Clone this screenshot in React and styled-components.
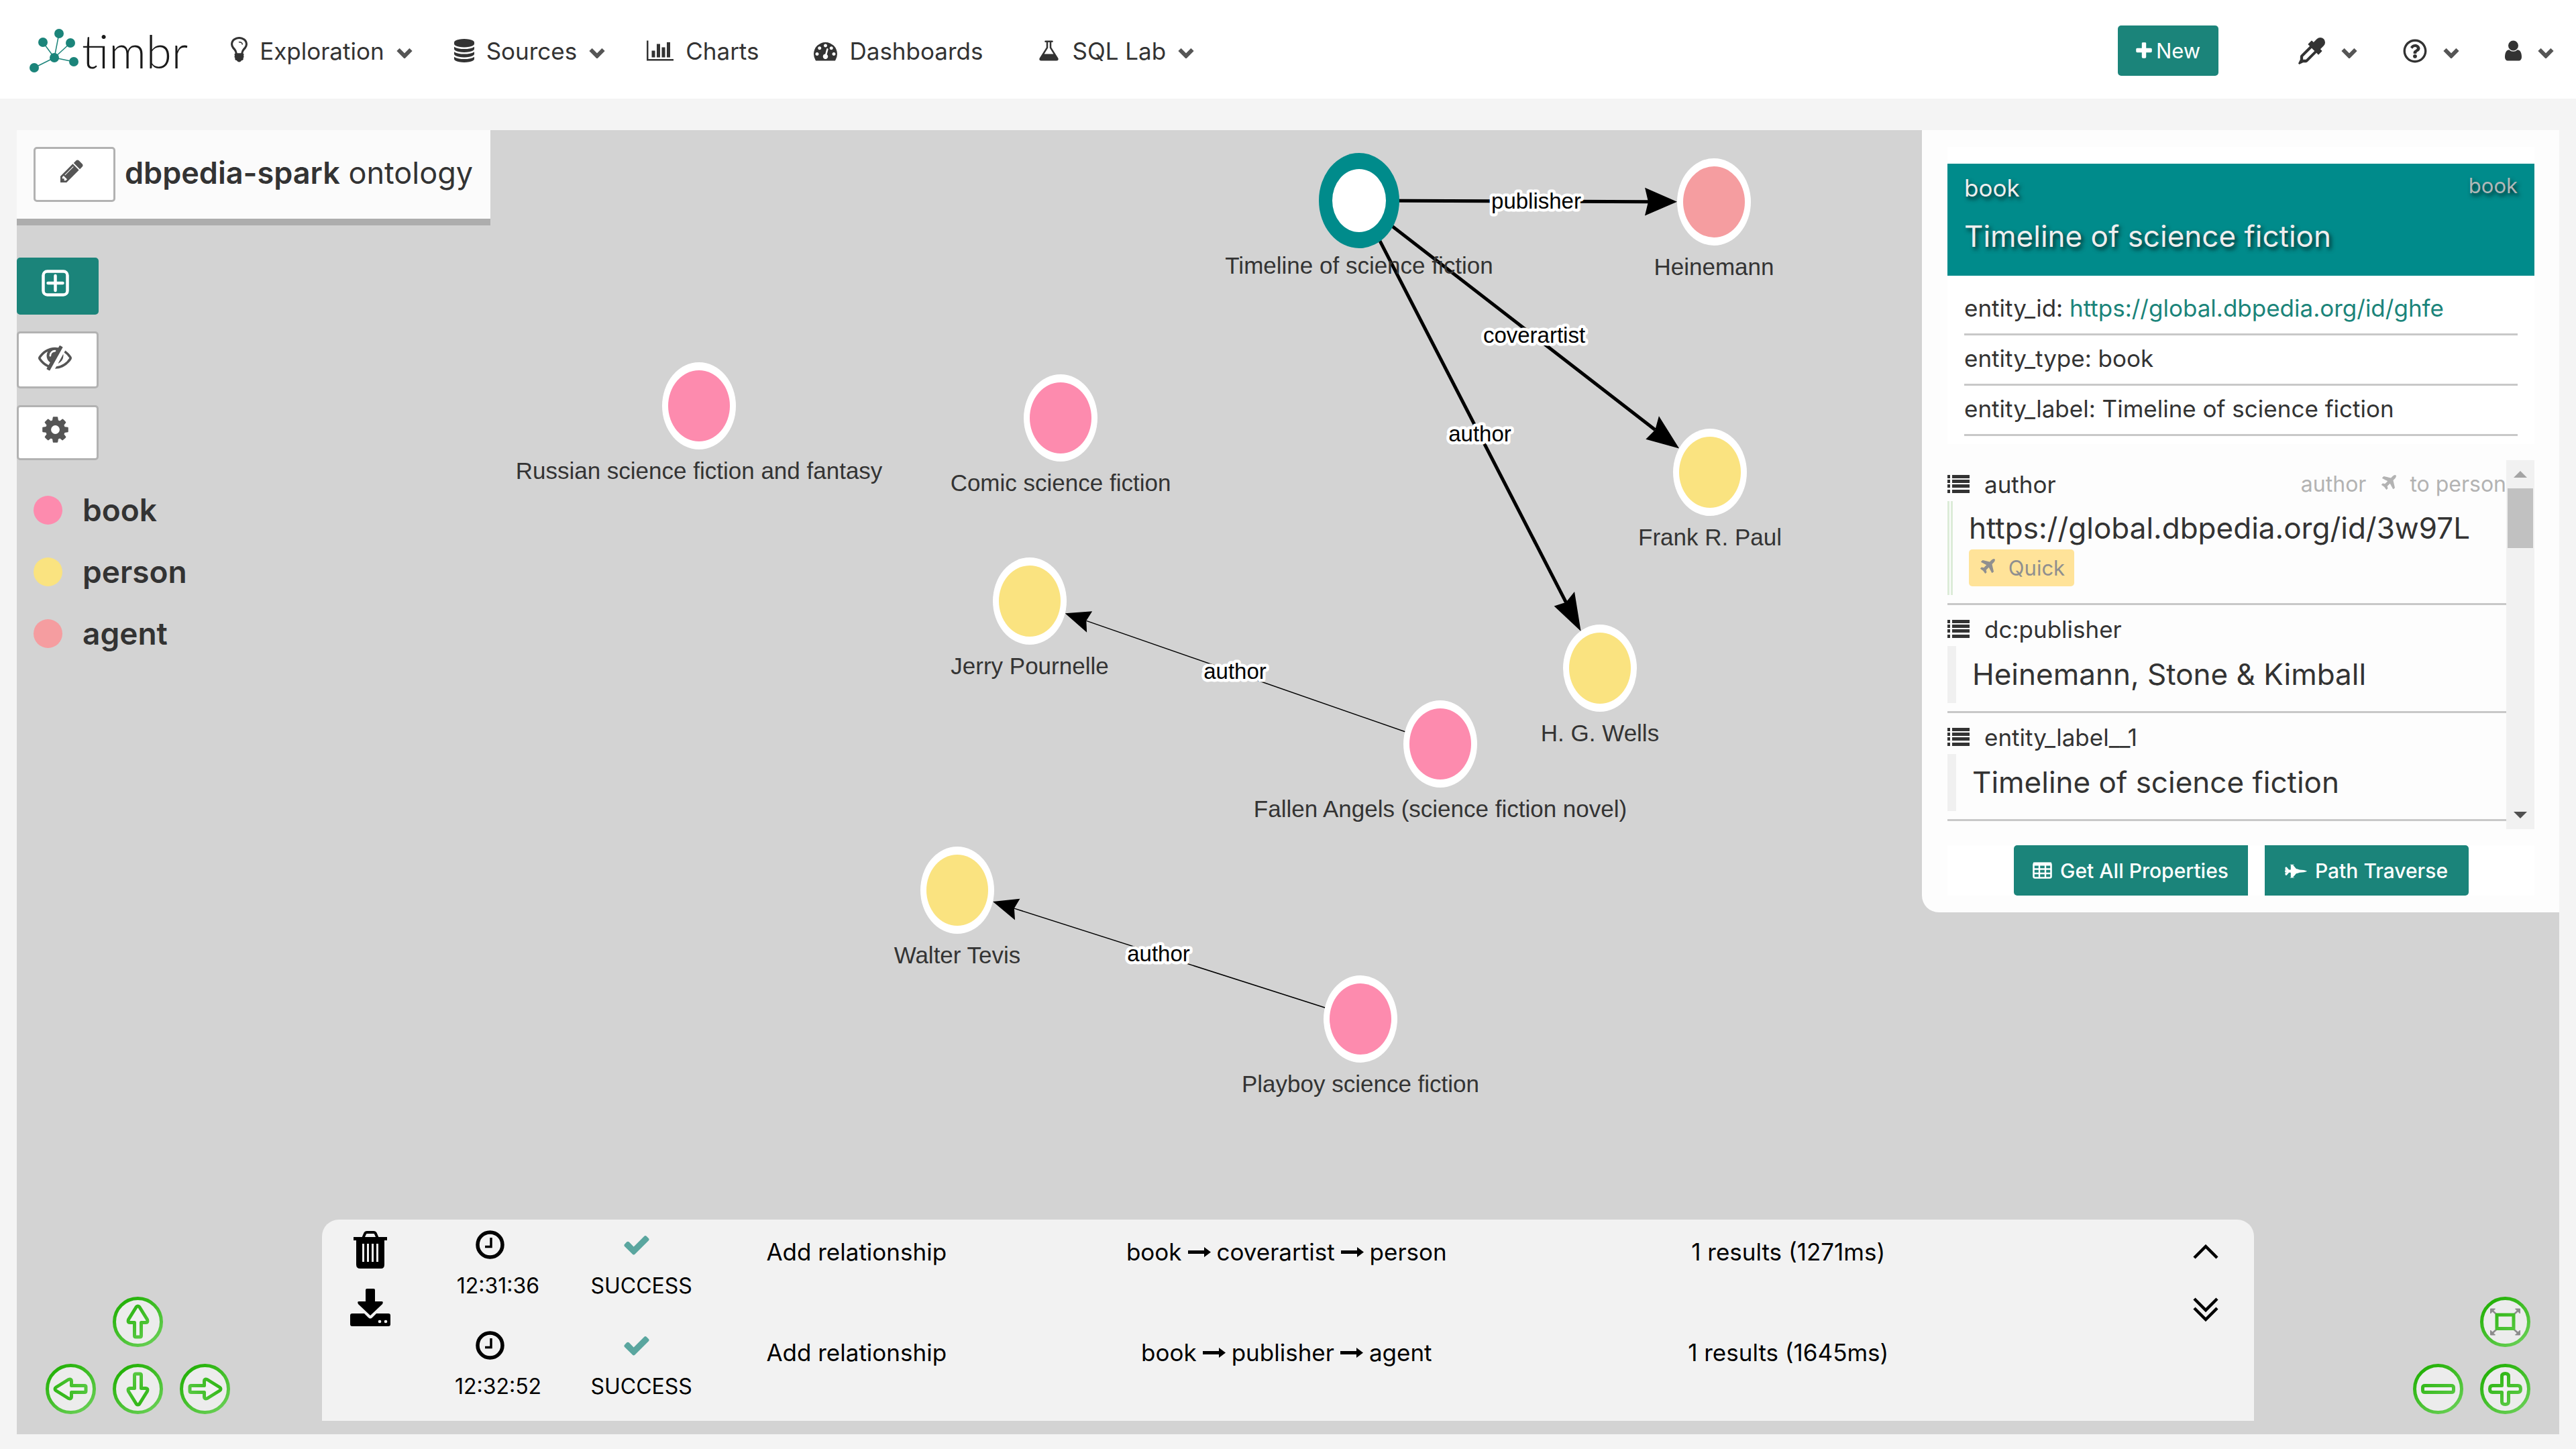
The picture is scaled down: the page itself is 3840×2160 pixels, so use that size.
import styled, { createGlobalStyle } from "styled-components";
import { FaRegQuestionCircle } from "react-icons/fa";

const GlobalStyle = createGlobalStyle`
  * {
    box-sizing: border-box;
  }
  body {
    margin: 0;
    background: #f4f4f4;
    color: #333;
    font-family: Inter, "Open Sans", sans-serif;
    font-size: 35px;
    line-height: 48px;
  }
  button {
    font: inherit;
    color: inherit;
    padding: 0;
    border: 0;
    background: none;
    cursor: pointer;
  }
  ul {
    list-style: none;
    margin: 0;
    padding: 0;
  }
  svg {
    display: block;
    flex: none;
  }
`;

/* ---------- icons ---------- */

// width of each glyph and its outline, y axis pointing up
const GLYPHS = {
  bulb: [
    1024,
    "M736 1056q0 -13 -9.5 -22.5t-22.5 -9.5t-22.5 9.5t-9.5 22.5q0 46 -54 71t-106 25q-13 0 -22.5 9.5t-9.5 22.5t9.5 22.5t22.5 9.5q50 0 99.5 -16t87 -54t37.5 -90zM896 1056q0 72 -34.5 134t-90 101.5t-123 62t-136.5 22.5t-136.5 -22.5t-123 -62t-90 -101.5t-34.5 -134q0 -101 68 -180q10 -11 30.5 -33t30.5 -33q128 -153 141 -298h228q13 145 141 298q10 11 30.5 33t30.5 33q68 79 68 180zM1024 1056q0 -155 -103 -268q-45 -49 -74.5 -87t-59.5 -95.5t-34 -107.5q47 -28 47 -82q0 -37 -25 -64q25 -27 25 -64q0 -52 -45 -81q13 -23 13 -47q0 -46 -31.5 -71t-77.5 -25q-20 -44 -60 -70t-87 -26t-87 26t-60 70q-46 0 -77.5 25t-31.5 71q0 24 13 47q-45 29 -45 81q0 37 25 64q-25 27 -25 64q0 54 47 82q-4 50 -34 107.5t-59.5 95.5t-74.5 87q-103 113 -103 268q0 99 44.5 184.5t117 142t164 89t186.5 32.5t186.5 -32.5t164 -89t117 -142t44.5 -184.5z",
  ],
  database: [
    1536,
    "M768 768q237 0 443 43t325 127v-170q0 -69 -103 -128t-280 -93.5t-385 -34.5t-385 34.5t-280 93.5t-103 128v170q119 -84 325 -127t443 -43zM768 0q237 0 443 43t325 127v-170q0 -69 -103 -128t-280 -93.5t-385 -34.5t-385 34.5t-280 93.5t-103 128v170q119 -84 325 -127t443 -43zM768 384q237 0 443 43t325 127v-170q0 -69 -103 -128t-280 -93.5t-385 -34.5t-385 34.5t-280 93.5t-103 128v170q119 -84 325 -127t443 -43zM768 1536q208 0 385 -34.5t280 -93.5t103 -128v-128q0 -69 -103 -128t-280 -93.5t-385 -34.5t-385 34.5t-280 93.5t-103 128v128q0 69 103 128t280 93.5t385 34.5z",
  ],
  chart: [
    2048,
    "M640 640v-512h-256v512h256zM1024 1152v-1024h-256v1024h256zM2048 0v-128h-2048v1536h128v-1408h1920zM1408 896v-768h-256v768h256zM1792 1280v-1152h-256v1152h256z",
  ],
  dashboard: [
    1792,
    "M384 384q0 53 -37.5 90.5t-90.5 37.5t-90.5 -37.5t-37.5 -90.5t37.5 -90.5t90.5 -37.5t90.5 37.5t37.5 90.5zM576 832q0 53 -37.5 90.5t-90.5 37.5t-90.5 -37.5t-37.5 -90.5t37.5 -90.5t90.5 -37.5t90.5 37.5t37.5 90.5zM1004 351l101 382q6 26 -7.5 48.5t-38.5 29.5t-48 -6.5t-30 -39.5l-101 -382q-60 -5 -107 -43.5t-63 -98.5q-20 -77 20 -146t117 -89t146 20t89 117q16 60 -6 117t-72 91zM1664 384q0 53 -37.5 90.5t-90.5 37.5t-90.5 -37.5t-37.5 -90.5t37.5 -90.5t90.5 -37.5t90.5 37.5t37.5 90.5zM1024 1024q0 53 -37.5 90.5t-90.5 37.5t-90.5 -37.5t-37.5 -90.5t37.5 -90.5t90.5 -37.5t90.5 37.5t37.5 90.5zM1472 832q0 53 -37.5 90.5t-90.5 37.5t-90.5 -37.5t-37.5 -90.5t37.5 -90.5t90.5 -37.5t90.5 37.5t37.5 90.5zM1792 384q0 -261 -141 -483q-19 -29 -54 -29h-1402q-35 0 -54 29q-141 221 -141 483q0 182 71 348t191 286t286 191t348 71t348 -71t286 -191t191 -286t71 -348z",
  ],
  flask: [
    1664,
    "M1527 88q56 -89 21.5 -152.5t-140.5 -63.5h-1152q-106 0 -140.5 63.5t21.5 152.5l503 793v399h-64q-26 0 -45 19t-19 45t19 45t45 19h512q26 0 45 -19t19 -45t-19 -45t-45 -19h-64v-399zM748 813l-272 -429h712l-272 429l-20 31v37v399h-128v-399v-37z",
  ],
  plus: [
    1408,
    "M1408 800v-192q0 -40 -28 -68t-68 -28h-416v-416q0 -40 -28 -68t-68 -28h-192q-40 0 -68 28t-28 68v416h-416q-40 0 -68 28t-28 68v192q0 40 28 68t68 28h416v416q0 40 28 68t68 28h192q40 0 68 -28t28 -68v-416h416q40 0 68 -28t28 -68z",
  ],
  user: [
    1280,
    "M1280 137q0 -109 -62.5 -187t-150.5 -78h-854q-88 0 -150.5 78t-62.5 187q0 85 8.5 160.5t31.5 152t58.5 131t94 89t134.5 34.5q131 -128 313 -128t313 128q76 0 134.5 -34.5t94 -89t58.5 -131t31.5 -152t8.5 -160.5zM1024 1024q0 -159 -112.5 -271.5t-271.5 -112.5t-271.5 112.5t-112.5 271.5t112.5 271.5t271.5 112.5t271.5 -112.5t112.5 -271.5z",
  ],
  dropper: [
    1792,
    "M1698 1442q94 -94 94 -226.5t-94 -225.5l-225 -223l104 -104q10 -10 10 -23t-10 -23l-210 -210q-10 -10 -23 -10t-23 10l-105 105l-603 -603q-37 -37 -90 -37h-203l-256 -128l-64 64l128 256v203q0 53 37 90l603 603l-105 105q-10 10 -10 23t10 23l210 210q10 10 23 10t23 -10l104 -104l223 225q93 94 225.5 94t226.5 -94zM512 64l576 576l-192 192l-576 -576v-192h192z",
  ],
  pencil: [
    1536,
    "M363 0l91 91l-235 235l-91 -91v-107h128v-128h107zM886 928q0 22 -22 22q-10 0 -17 -7l-542 -542q-7 -7 -7 -17q0 -22 22 -22q10 0 17 7l542 542q7 7 7 17zM832 1120l416 -416l-832 -832h-416v416zM1515 1024q0 -53 -37 -90l-166 -166l-416 416l166 165q36 38 90 38q53 0 91 -38l235 -234q37 -39 37 -91z",
  ],
  eyeSlash: [
    1792,
    "M555 201l78 141q-87 63 -136 159t-49 203q0 121 61 225q-229 -117 -381 -353q167 -258 427 -375zM944 960q0 20 -14 34t-34 14q-125 0 -214.5 -89.5t-89.5 -214.5q0 -20 14 -34t34 -14t34 14t14 34q0 86 61 147t147 61q20 0 34 14t14 34zM1307 1151q0 -7 -1 -9q-106 -189 -316 -567t-315 -566l-49 -89q-10 -16 -28 -16q-12 0 -134 70q-16 10 -16 28q0 12 44 87q-143 65 -263.5 173t-208.5 245q-20 31 -20 69t20 69q153 235 380 371t496 136q89 0 180 -17l54 97q10 16 28 16q5 0 18 -6t31 -15.5t33 -18.5t31.5 -18.5t19.5 -11.5q16 -10 16 -27zM1344 704q0 -139 -79 -253.5t-209 -164.5l280 502q8 -45 8 -84zM1792 576q0 -35 -20 -69q-39 -64 -109 -145q-150 -172 -347.5 -267t-419.5 -95l74 132q212 18 392.5 137t301.5 307q-115 179 -282 294l63 112q95 -64 182.5 -153t144.5 -184q20 -34 20 -69z",
  ],
  cog: [
    1536,
    "M1024 640q0 106 -75 181t-181 75t-181 -75t-75 -181t75 -181t181 -75t181 75t75 181zM1536 749v-222q0 -12 -8 -23t-20 -13l-185 -28q-19 -54 -39 -91q35 -50 107 -138q10 -12 10 -25t-9 -23q-27 -37 -99 -108t-94 -71q-12 0 -26 9l-138 108q-44 -23 -91 -38q-16 -136 -29 -186q-7 -28 -36 -28h-222q-14 0 -24.5 8.5t-11.5 21.5l-28 184q-49 16 -90 37l-141 -107q-10 -9 -25 -9q-14 0 -25 11q-126 114 -165 168q-7 10 -7 23q0 12 8 23q15 21 51 66.5t54 70.5q-27 50 -41 99l-183 27q-13 2 -21 12.5t-8 23.5v222q0 12 8 23t19 13l186 28q14 46 39 92q-40 57 -107 138q-10 12 -10 24q0 10 9 23q26 36 98.5 107.5t94.5 71.5q13 0 26 -10l138 -107q44 23 91 38q16 136 29 186q7 28 36 28h222q14 0 24.5 -8.5t11.5 -21.5l28 -184q49 -16 90 -37l142 107q9 9 24 9q13 0 25 -10q129 -119 165 -170q7 -8 7 -22q0 -12 -8 -23q-15 -21 -51 -66.5t-54 -70.5q26 -50 41 -98l183 -28q13 -2 21 -12.5t8 -23.5z",
  ],
  plane: [
    1600,
    "M1568 1504q44 -52 12 -148t-108 -172l-161 -161l160 -696q5 -19 -12 -33l-128 -96q-7 -6 -19 -6q-4 0 -7 1q-15 3 -21 16l-279 508l-259 -259l53 -194q5 -17 -8 -31l-96 -96q-9 -9 -23 -9h-2q-15 2 -24 13l-189 252l-252 189q-11 7 -13 23q-1 13 9 25l96 97q9 9 23 9q6 0 8 -1l194 -53l259 259l-508 279q-14 8 -17 24q-2 16 9 27l128 128q14 13 30 8l665 -159l160 160q76 76 172 108t148 -12z",
  ],
  jet: [
    1920,
    "M1920 576q-1 -32 -288 -96l-352 -32l-224 -64h-64l-293 -352h69q26 0 45 -4.5t19 -11.5t-19 -11.5t-45 -4.5h-96h-160h-64v32h64v416h-160l-192 -224h-96l-32 32v192h32v32h128v8l-192 24v128l192 24v8h-128v32h-32v192l32 32h96l192 -224h160v416h-64v32h64h160h96q26 0 45 -4.5t19 -11.5t-19 -11.5t-45 -4.5h-69l293 -352h64l224 -64l352 -32q261 -58 287 -93z",
  ],
  check: [
    1792,
    "M1671 970q0 -40 -28 -68l-724 -724l-136 -136q-28 -28 -68 -28t-68 28l-136 136l-362 362q-28 28 -28 68t28 68l136 136q28 28 68 28t68 -28l294 -295l656 657q28 28 68 28t68 -28l136 -136q28 -28 28 -68z",
  ],
};

function Glyph({ name, size = 35 }) {
  const [width, d] = GLYPHS[name];
  return (
    <svg
      width={Math.round((width / 1792) * size)}
      height={size}
      viewBox={`0 0 ${width} 1792`}
      fill="currentColor"
      aria-hidden="true"
    >
      <path transform="matrix(1 0 0 -1 0 1536)" d={d} />
    </svg>
  );
}

const CaretIcon = styled.svg`
  margin-top: 8px;
`;

const Caret = () => (
  <CaretIcon width="24" height="15" viewBox="0 0 24 15" aria-hidden="true">
    <path d="M2.500 2l9.500 9.500L21.500 2" fill="none" stroke="#555" strokeWidth="6" />
  </CaretIcon>
);

const ListIcon = () => (
  <svg width="33" height="27" viewBox="0 0 33 27" fill="#333" aria-hidden="true">
    {[0, 7, 14, 22].map((y) => (
      <g key={y}>
        <rect y={y} width="4" height="5" />
        <rect x="7" y={y} width="26" height="5" />
      </g>
    ))}
  </svg>
);

const TableIcon = () => (
  <svg width="29" height="25" viewBox="0 0 29 25" fill="none" stroke="#fff" aria-hidden="true">
    <rect x="1.5" y="2" width="26" height="21.5" rx="2" strokeWidth="2.6" />
    <path d="M1 3h27" strokeWidth="5" />
    <path d="M10 3v20M19 3v20M2 10.5h25M2 17h25" strokeWidth="2.4" />
  </svg>
);

const AddBoxIcon = () => (
  <svg width="41" height="40" viewBox="0 0 41 40" fill="none" stroke="#fff" strokeWidth="4.5" aria-hidden="true">
    <rect x="2.5" y="2.5" width="36" height="35" rx="6" />
    <path d="M20.500 9v22M9.500 20h22" strokeLinecap="round" />
  </svg>
);

const TrashIcon = () => (
  <svg width="52" height="56" viewBox="0 0 52 56" aria-hidden="true">
    <path d="M15 11l3-7q1-2 3-2h10q2 0 3 2l3 7" fill="none" stroke="#000" strokeWidth="4" />
    <path d="M1 9h50v5h-4v36q0 6-5 6H11q-6 0-6-6V14H1z" />
    <path d="M15.500 19v27M22.500 19v27M29.500 19v27M36.500 19v27" stroke="#f2f2f2" strokeWidth="3" />
  </svg>
);

const DownloadIcon = () => (
  <svg width="60" height="56" viewBox="0 0 60 56" aria-hidden="true">
    <path d="M25 0h10q2 0 2 2v17h10q3 0 1 4L30 40 12 23q-2-4 1-4h10V2q0-2 2-2z" />
    <path d="M3 37h18l6 6q3 3 6 0l6-6h18q3 0 3 3v13q0 3-3 3H3q-3 0-3-3V40q0-3 3-3z" />
    <circle cx="44" cy="49" r="2.300" fill="#f2f2f2" />
    <circle cx="53" cy="49" r="2.300" fill="#f2f2f2" />
  </svg>
);

const ClockIcon = () => (
  <svg width="43" height="43" viewBox="0 0 43 43" fill="none" stroke="#000" aria-hidden="true">
    <circle cx="21.500" cy="21.500" r="18.500" strokeWidth="5.500" />
    <path d="M23 11v13.500h-9" strokeWidth="3.500" />
  </svg>
);

const ArrowIcon = () => (
  <svg width="34" height="15" viewBox="0 0 34 15" aria-hidden="true">
    <path d="M0 5h24V0l10 7.500L24 15v-5H0z" />
  </svg>
);

const Chevrons = ({ d, height }) => (
  <svg width="38" height={height} viewBox={`0 0 38 ${height}`} fill="none" stroke="#000" strokeWidth="4.500" aria-hidden="true">
    <path d={d} />
  </svg>
);

/* ---------- top bar ---------- */

const Page = styled.div`
  display: flex;
  flex-direction: column;
  min-height: 100vh;
`;
const TopBar = styled.header`
  display: flex;
  align-items: center;
  height: 147px;
  padding: 4px 33px 0 44px;
  background: #fff;
`;
const Logo = styled.a`
  display: flex;
  align-items: center;
  gap: 4px;
  margin-right: 64px;
  color: #1a1a1a;
  font-family: Lato, sans-serif;
  font-size: 69px;
  font-weight: 300;
  line-height: 72px;
  text-decoration: none;
`;
const Nav = styled.nav`
  display: flex;
  flex: 1;
`;
const NavItem = styled.button`
  display: flex;
  align-items: center;
  gap: 18px;
  margin-right: ${({ $plain }) => ($plain ? 82 : 62)}px;
`;
const NewButton = styled.button`
  display: flex;
  align-items: center;
  justify-content: center;
  gap: 6px;
  width: 150px;
  height: 75px;
  margin-right: 51px;
  border-radius: 5px;
  background: #1b847a;
  color: #fff;
  font-size: 31px;
`;
const ToolButton = styled.button`
  display: flex;
  align-items: center;
  gap: 24px;
  margin-left: 68px;
`;

const NAV = [
  { icon: "bulb", size: 44, label: "Exploration", menu: true },
  { icon: "database", label: "Sources", menu: true },
  { icon: "chart", label: "Charts" },
  { icon: "dashboard", label: "Dashboards" },
  { icon: "flask", label: "SQL Lab", menu: true },
];

function LogoMark() {
  const dots = [
    [44, 7],
    [20, 20],
    [61, 21],
    [66, 49],
    [7, 58],
  ];
  return (
    <svg width="74" height="66" viewBox="0 0 74 66" fill="#1b847a" aria-hidden="true">
      {dots.map(([x, y]) => (
        <g key={x}>
          <path d={`M37 43L${x} ${y}`} stroke="#1b847a" strokeWidth="1.500" />
          <circle cx={x} cy={y} r="7" />
        </g>
      ))}
      <circle cx="37" cy="43" r="7" />
    </svg>
  );
}

function Header() {
  return (
    <TopBar>
      <Logo href="#">
        <LogoMark />
        timbr
      </Logo>
      <Nav>
        {NAV.map(({ icon, size, label, menu }) => (
          <NavItem key={label} $plain={!menu}>
            <Glyph name={icon} size={size} />
            {label}
            {menu && <Caret />}
          </NavItem>
        ))}
      </Nav>
      <NewButton>
        <Glyph name="plus" size={30} />
        New
      </NewButton>
      <ToolButton aria-label="Theme">
        <Glyph name="dropper" size={40} />
        <Caret />
      </ToolButton>
      <ToolButton aria-label="Help">
        <FaRegQuestionCircle size={36} />
        <Caret />
      </ToolButton>
      <ToolButton aria-label="Account">
        <Glyph name="user" />
        <Caret />
      </ToolButton>
    </TopBar>
  );
}

/* ---------- graph ---------- */

const COLORS = { book: "#fd8bae", person: "#fae380", agent: "#f59da0" };
const STRETCH = 1.17; // the graph is taller than it is wide

const NODES = {
  timeline: { x: 2001, y: 105, label: "Timeline of science fiction", selected: true },
  heinemann: { x: 2530, y: 107, label: "Heinemann", type: "agent" },
  paul: { x: 2524, y: 510, label: "Frank R. Paul", type: "person" },
  wells: { x: 2360, y: 802, label: "H. G. Wells", type: "person" },
  fallen: { x: 2122, y: 915, label: "Fallen Angels (science fiction novel)", type: "book" },
  playboy: { x: 2003, y: 1325, label: "Playboy science fiction", type: "book" },
  tevis: { x: 1402, y: 1133, label: "Walter Tevis", type: "person" },
  pournelle: { x: 1510, y: 702, label: "Jerry Pournelle", type: "person" },
  russian: { x: 1017, y: 411, label: "Russian science fiction and fantasy", type: "book" },
  comic: { x: 1556, y: 429, label: "Comic science fiction", type: "book" },
};
const EDGES = [
  { from: "timeline", to: "heinemann", label: "publisher", x: 2265, y: 117, bold: true },
  { from: "timeline", to: "paul", label: "coverartist", x: 2262, y: 317, bold: true },
  { from: "timeline", to: "wells", label: "author", x: 2181, y: 464, bold: true },
  { from: "fallen", to: "pournelle", label: "author", x: 1816, y: 818 },
  { from: "playboy", to: "tevis", label: "author", x: 1702, y: 1239 },
];

const GraphArea = styled.svg`
  position: absolute;
  inset: 0;
  width: 100%;
  height: 100%;
  font-family: "Liberation Sans", Arial, sans-serif;
  text-anchor: middle;
`;
const NodeLabel = styled.text`
  font-size: 35px;
  fill: #343434;
`;
const EdgeLabel = styled.text`
  font-size: 33px;
  fill: #000;
  stroke: #fff;
  stroke-width: 9px;
  stroke-linejoin: round;
  paint-order: stroke;
`;

function Edge({ from, to, label, x, y, bold }) {
  const a = NODES[from];
  const b = NODES[to];
  const dx = b.x - a.x;
  const dy = (b.y - a.y) / STRETCH;
  const len = Math.hypot(dx, dy);
  const ux = dx / len;
  const uy = dy / len;
  const size = bold ? 48 : 38;
  // point `along` the edge measured back from the target, `side` off it
  const at = (along, side = 0) => [
    b.x - ux * along - uy * side,
    b.y - (uy * along - ux * side) * STRETCH,
  ];
  const points = [at(55), at(55 + size, size * 0.37), at(50 + size), at(55 + size, size * -0.37)];
  const [ex, ey] = at(50 + size);
  return (
    <g>
      <line x1={a.x} y1={a.y} x2={ex} y2={ey} stroke="#000" strokeWidth={bold ? 5 : 1.5} />
      <polygon points={points.join(" ")} />
      <EdgeLabel x={x} y={y}>
        {label}
      </EdgeLabel>
    </g>
  );
}

function Graph() {
  return (
    <GraphArea viewBox="0 0 3790 1944">
      {EDGES.map((edge) => (
        <Edge key={edge.from + edge.to} {...edge} />
      ))}
      {Object.values(NODES).map(({ x, y, label, type, selected }) => (
        <g key={label}>
          <ellipse cx={x} cy={y} rx={selected ? 60 : 55} ry={selected ? 71 : 65} fill={selected ? "#008b8b" : "#fff"} />
          <ellipse cx={x} cy={y} rx={selected ? 40 : 46} ry={selected ? 47 : 53} fill={selected ? "#fff" : COLORS[type]} />
          <NodeLabel x={x} y={y + 109}>
            {label}
          </NodeLabel>
        </g>
      ))}
    </GraphArea>
  );
}

/* ---------- workspace ---------- */

const Workspace = styled.main`
  position: relative;
  display: flex;
  flex: 1;
  flex-direction: column;
  justify-content: space-between;
  margin: 47px 25px 22px;
  background: #d3d3d3;
`;
const Row = styled.div`
  position: relative;
  display: flex;
  align-items: flex-start;
  justify-content: space-between;
`;
const TitleBar = styled.div`
  display: flex;
  align-items: center;
  gap: 14px;
  height: 142px;
  padding: 0 26px 0 25px;
  border-bottom: 10px solid #adadad;
  background: #fbfbfb;
`;
const Title = styled.h1`
  margin: 0;
  padding-bottom: 4px;
  font-size: 45px;
  font-weight: 400;
  strong {
    font-weight: 600;
  }
`;
const IconButton = styled.button`
  display: flex;
  align-items: center;
  justify-content: center;
  width: 122px;
  height: ${({ $tall }) => ($tall ? 85 : 82)}px;
  padding: 0 8px 10px 0;
  border: 3px solid ${({ $active }) => ($active ? "#1b847a" : "#b2b2b2")};
  border-radius: 5px;
  background: ${({ $active }) => ($active ? "#1b847a" : "#fff")};
  color: #555;
`;
const Tools = styled.div`
  display: flex;
  flex-direction: column;
  gap: 25px;
  margin: 48px 0 28px;
`;
const LegendItem = styled.li`
  display: flex;
  align-items: center;
  gap: 30px;
  height: 92px;
  padding-left: 25px;
  font-size: 46px;
  font-weight: 600;
  &::before {
    content: "";
    width: 43px;
    height: 43px;
    border-radius: 50%;
    background: ${({ $color }) => $color};
  }
`;

/* ---------- entity panel ---------- */

const Panel = styled.aside`
  width: 950px;
  padding: 25px 37px 25px 38px;
  border-radius: 0 0 0 25px;
  background: #fdfdfd;
`;
const Card = styled.section`
  padding: 25px 0 12px;
  background: #fff;
`;
const CardHead = styled.div`
  height: 167px;
  padding: 12px 25px;
  background: #008b8b;
  color: #eee;
  text-shadow: 3px 4px 6px rgba(0, 0, 0, 0.7);
`;
const CardTypes = styled.div`
  display: flex;
  justify-content: space-between;
  small {
    color: #b0b8b8;
    font-size: 31px;
    line-height: 42px;
  }
`;
const CardTitle = styled.h2`
  margin: 24px 0 0;
  font-size: 44px;
  font-weight: 400;
`;
const Facts = styled.ul`
  padding: 14px 25px 0;
  li {
    height: 75px;
    padding-top: 10px;
    border-bottom: 3px solid #c8c8c8;
  }
  a {
    color: #1b847a;
    text-decoration: none;
  }
`;
const Scroller = styled.div`
  display: flex;
  height: 550px;
  margin: 24px 0;
`;
const Properties = styled.ul`
  flex: 1;
  overflow: hidden;
`;
const Property = styled.li`
  padding-bottom: 12px;
  border-bottom: 3px solid #c8c8c8;
`;
const PropertyHead = styled.div`
  display: flex;
  align-items: center;
  gap: 22px;
  height: 61px;
  padding-top: 10px;
`;
const Target = styled.span`
  display: flex;
  align-items: center;
  gap: 20px;
  margin-left: auto;
  color: #b3b3b3;
  font-size: 32px;
`;
const Value = styled.div`
  padding-left: 24px;
  border-left: 13px solid #f0f0f0;
  font-size: 44px;
  line-height: 85px;
`;
const LinkValue = styled.div`
  height: 140px;
  padding: 16px 0 0 24px;
  border-left: 8px double #dcecd8;
  font-size: 44px;
`;
const QuickButton = styled.button`
  display: flex;
  align-items: center;
  justify-content: center;
  gap: 20px;
  width: 157px;
  height: 55px;
  margin-top: 8px;
  border-radius: 5px;
  background: #ffe399;
  color: #8f8f8f;
  font-size: 31px;
`;
const Scrollbar = styled.div`
  display: flex;
  flex-direction: column;
  align-items: center;
  width: 42px;
  background: #f1f1f1;
`;
const ScrollArrow = styled.button`
  display: flex;
  align-items: center;
  justify-content: center;
  width: 42px;
  height: 42px;
  &::before {
    content: "";
    border: 10px solid transparent;
    ${({ $up }) =>
      $up
        ? "border-bottom-color: #a3a3a3; border-top: 0;"
        : "border-top-color: #505050; border-bottom: 0;"}
  }
`;
const Thumb = styled.div`
  width: 38px;
  height: 89px;
  margin-bottom: auto;
  background: #c1c1c1;
`;
const Actions = styled.div`
  display: flex;
  justify-content: center;
  gap: 25px;
  background: #fff;
`;
const Action = styled.button`
  display: flex;
  align-items: center;
  justify-content: center;
  gap: 12px;
  width: ${({ $wide }) => ($wide ? 349 : 304)}px;
  height: 75px;
  border-radius: ${({ $wide }) => ($wide ? "5px 0 0 5px" : "0 5px 5px 0")};
  background: #1b847a;
  color: #fff;
  font-size: 30px;
  font-weight: 500;
`;

function EntityPanel() {
  return (
    <Panel>
      <Card>
        <CardHead>
          <CardTypes>
            book
            <small>book</small>
          </CardTypes>
          <CardTitle>Timeline of science fiction</CardTitle>
        </CardHead>
        <Facts>
          <li>
            entity_id: <a href="#ghfe">https://global.dbpedia.org/id/ghfe</a>
          </li>
          <li>entity_type: book</li>
          <li>entity_label: Timeline of science fiction</li>
        </Facts>
      </Card>
      <Scroller>
        <Properties>
          <Property>
            <PropertyHead>
              <ListIcon />
              author
              <Target>
                author
                <Glyph name="plane" size={28} />
                to person
              </Target>
            </PropertyHead>
            <LinkValue>
              https://global.dbpedia.org/id/3w97L
              <QuickButton>
                <Glyph name="plane" size={28} />
                Quick
              </QuickButton>
            </LinkValue>
          </Property>
          <Property>
            <PropertyHead>
              <ListIcon />
              dc:publisher
            </PropertyHead>
            <Value>Heinemann, Stone &amp; Kimball</Value>
          </Property>
          <Property>
            <PropertyHead>
              <ListIcon />
              entity_label__1
            </PropertyHead>
            <Value>Timeline of science fiction</Value>
          </Property>
        </Properties>
        <Scrollbar>
          <ScrollArrow $up aria-label="Scroll up" />
          <Thumb />
          <ScrollArrow aria-label="Scroll down" />
        </Scrollbar>
      </Scroller>
      <Actions>
        <Action $wide>
          <TableIcon />
          Get All Properties
        </Action>
        <Action>
          <Glyph name="jet" size={31} />
          Path Traverse
        </Action>
      </Actions>
    </Panel>
  );
}

/* ---------- round graph controls ---------- */

const BottomRow = styled.div`
  position: relative;
  display: grid;
  grid-template-columns: 12% 76% 12%;
  align-items: end;
`;
const Pad = styled.div`
  display: grid;
  grid-template-columns: repeat(${({ $columns }) => $columns}, 75px);
  gap: 25px;
  justify-content: ${({ $columns }) => ($columns === 3 ? "start" : "end")};
  padding: 0 43px 30px;
`;
const PadButton = styled.button`
  grid-column: ${({ $column }) => $column};
`;

const ARROW = "M37.500 14q1.500 0 2.500 1.500L51.500 34q1.500 4.500-2 4.500h-7V58q0 2-2 2h-6q-2 0-2-2V38.500h-7q-3.500 0-2-4.500L35 15.500q1-1.500 2.500-1.500z";
const PLUS = "M37.500 14.500q5 0 5 4v14h14q4 0 4 5t-4 5h-14v14q0 4-5 4t-5-4v-14h-14q-4 0-4-5t4-5h14v-14q0-4 5-4z";
const MINUS = "M18 32.500h39q3.500 0 3.500 3v4q0 3-3.500 3H18q-3.500 0-3.500-3v-4q0-3 3.500-3z";
const FIT = "M25 27h25v20.500H25z";

function RoundIcon({ d, turn = 0, corners }) {
  return (
    <svg width="75" height="75" viewBox="0 0 75 75" aria-hidden="true">
      <circle cx="37.500" cy="37.500" r="35" fill="#ececec" stroke="url(#green)" strokeWidth="5" />
      {corners && (
        <g stroke="#8c8c8c" fill="#8c8c8c" strokeWidth="2.500">
          <path d="M17 19.500l10 9M58 19.500l-10 9M17 55.500l10-9M58 55.500l-10-9" />
          <path d="M15.500 18h7l-7 7zM59.500 18h-7l7 7zM15.500 57h7l-7-7zM59.500 57h-7l7-7z" strokeWidth="1" />
        </g>
      )}
      <path
        d={d}
        transform={`rotate(${turn} 37.5 37.5)`}
        fill={corners ? "#ececec" : "#f1f1f1"}
        stroke="url(#green)"
        strokeWidth="5"
        strokeLinejoin="round"
      />
    </svg>
  );
}

/* ---------- query log ---------- */

const Log = styled.section`
  display: flex;
  height: 300px;
  margin-bottom: 20px;
  border-radius: 25px 25px 0 0;
  background: #f2f2f2;
  color: #000;
  overflow: hidden;
`;
const LogTools = styled.div`
  display: flex;
  flex-direction: column;
  align-items: center;
  gap: ${({ $gap }) => $gap}px;
  width: 144px;
  padding-top: ${({ $top }) => $top}px;
`;
const LogBody = styled.div`
  flex: 1;
  padding-right: 218px;
`;
const LogTable = styled.table`
  width: 100%;
  table-layout: fixed;
  border-collapse: collapse;
  td {
    height: 150px;
    padding: 16px 0 0;
    text-align: center;
    vertical-align: top;
  }
`;
const Stack = styled.div`
  display: flex;
  flex-direction: column;
  align-items: center;
  gap: 16px;
  font-size: 32px;
  svg {
    height: 43px;
    margin-right: ${({ $shift }) => $shift}px;
  }
`;
const Line = styled.div`
  display: flex;
  align-items: center;
  justify-content: center;
  gap: 9px;
  padding-top: 8px;
`;
const Success = styled.span`
  color: #5aa69f;
`;

const LOG = [
  { time: "12:31:36", path: ["book", "coverartist", "person"], result: "1 results (1271ms)" },
  { time: "12:32:52", path: ["book", "publisher", "agent"], result: "1 results (1645ms)" },
];

function QueryLog() {
  return (
    <Log>
      <LogTools $top={17} $gap={30}>
        <button aria-label="Clear log">
          <TrashIcon />
        </button>
        <button aria-label="Download log">
          <DownloadIcon />
        </button>
      </LogTools>
      <LogBody>
        <LogTable>
          <colgroup>
            <col width="10%" />
            <col width="8%" />
            <col width="19%" />
            <col width="35%" />
            <col width="28%" />
          </colgroup>
          <tbody>
            {LOG.map(({ time, path, result }) => (
              <tr key={time}>
                <td>
                  <Stack $shift={24}>
                    <ClockIcon />
                    {time}
                  </Stack>
                </td>
                <td>
                  <Stack $shift={14}>
                    <Success>
                      <Glyph name="check" size={50} />
                    </Success>
                    SUCCESS
                  </Stack>
                </td>
                <td>
                  <Line>Add relationship</Line>
                </td>
                <td>
                  <Line>
                    {path[0]}
                    <ArrowIcon />
                    {path[1]}
                    <ArrowIcon />
                    {path[2]}
                  </Line>
                </td>
                <td>
                  <Line>{result}</Line>
                </td>
              </tr>
            ))}
          </tbody>
        </LogTable>
      </LogBody>
      <LogTools $top={37} $gap={57}>
        <button aria-label="Collapse">
          <Chevrons height={22} d="M2 20L19 3l17 17" />
        </button>
        <button aria-label="Scroll to end">
          <Chevrons height={36} d="M2 2l17 17L36 2M2 16l17 17 17-17" />
        </button>
      </LogTools>
    </Log>
  );
}

const Defs = styled.svg`
  position: absolute;
`;

export default function App() {
  return (
    <Page>
      <GlobalStyle />
      <Defs width="0" height="0">
        <linearGradient id="green" gradientUnits="userSpaceOnUse" x1="15" y1="5" x2="60" y2="70">
          <stop offset="0" stopColor="#22b106" />
          <stop offset="1" stopColor="#66ce52" />
        </linearGradient>
      </Defs>
      <Header />
      <Workspace>
        <Graph />
        <Row>
          <div>
            <TitleBar>
              <IconButton aria-label="Rename">
                <Glyph name="pencil" size={40} />
              </IconButton>
              <Title>
                <strong>dbpedia-spark</strong> ontology
              </Title>
            </TitleBar>
            <Tools>
              <IconButton $tall $active aria-label="Add">
                <AddBoxIcon />
              </IconButton>
              <IconButton $tall aria-label="Hide">
                <Glyph name="eyeSlash" size={50} />
              </IconButton>
              <IconButton aria-label="Settings">
                <Glyph name="cog" size={45} />
              </IconButton>
            </Tools>
            <ul>
              {Object.entries(COLORS).map(([name, color]) => (
                <LegendItem key={name} $color={color}>
                  {name}
                </LegendItem>
              ))}
            </ul>
          </div>
          <EntityPanel />
        </Row>
        <BottomRow>
          <Pad $columns={3}>
            <PadButton $column={2} aria-label="Move up">
              <RoundIcon d={ARROW} />
            </PadButton>
            <PadButton $column={1} aria-label="Move left">
              <RoundIcon d={ARROW} turn={-90} />
            </PadButton>
            <PadButton $column={2} aria-label="Move down">
              <RoundIcon d={ARROW} turn={180} />
            </PadButton>
            <PadButton $column={3} aria-label="Move right">
              <RoundIcon d={ARROW} turn={90} />
            </PadButton>
          </Pad>
          <QueryLog />
          <Pad $columns={2}>
            <PadButton $column={2} aria-label="Fit to view">
              <RoundIcon d={FIT} corners />
            </PadButton>
            <PadButton $column={1} aria-label="Zoom out">
              <RoundIcon d={MINUS} />
            </PadButton>
            <PadButton $column={2} aria-label="Zoom in">
              <RoundIcon d={PLUS} />
            </PadButton>
          </Pad>
        </BottomRow>
      </Workspace>
    </Page>
  );
}
